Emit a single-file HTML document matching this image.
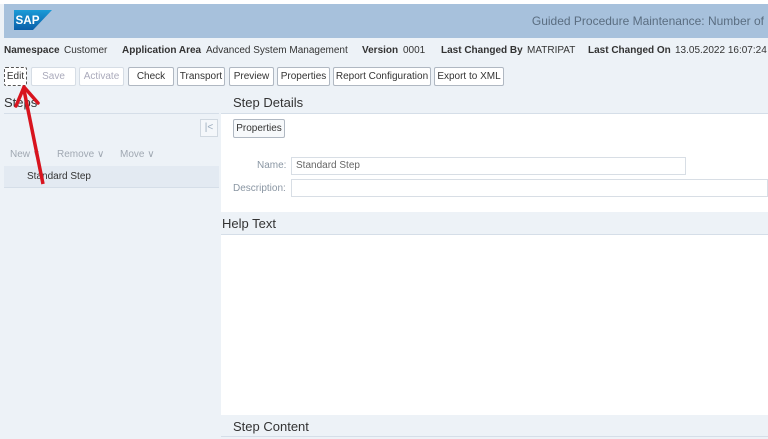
<!DOCTYPE html>
<html><head><style>
*{margin:0;padding:0;box-sizing:border-box}
body{width:768px;height:439px;overflow:hidden;background:#edf2f7;font-family:"Liberation Sans",Arial,sans-serif;position:relative;color:#333}
.a{position:absolute;white-space:nowrap}
.i{position:absolute;top:45px;font-size:10px;white-space:nowrap;color:#333}
.btn{position:absolute;top:67px;height:19px;border:1px solid #b0b8c2;background:#fff;font-size:10px;line-height:17px;text-align:center;color:#333;border-radius:2px;white-space:nowrap;overflow:hidden}
.dis{color:#aab;border-color:#d6dde5}
.hd{position:absolute;font-size:13px;color:#333;white-space:nowrap}
</style></head><body>
<div class="a" style="left:0;top:0;width:768px;height:4px;background:#fff"></div>
<div class="a" style="left:4px;top:4px;width:764px;height:34px;background:#a7c1dc"></div>
<svg class="a" style="left:14px;top:10px" width="38" height="20" viewBox="0 0 38 20"><defs><linearGradient id="g" x1="0" y1="0" x2="0" y2="1"><stop offset="0" stop-color="#1a9bd7"/><stop offset="1" stop-color="#0a5ea8"/></linearGradient></defs><path d="M0 0H38L19 20H0Z" fill="url(#g)"/><text x="1.5" y="14" font-family="Liberation Sans" font-weight="bold" font-size="11.5" fill="#fff" textLength="24" lengthAdjust="spacingAndGlyphs">SAP</text></svg>
<div class="a" style="right:4px;top:14px;font-size:12px;color:#5a6d80">Guided Procedure Maintenance: Number of</div>
<div class="i" style="left:4px"><b>Namespace</b></div><div class="i" style="left:64px">Customer</div>
<div class="i" style="left:122px"><b>Application Area</b></div><div class="i" style="left:206px">Advanced System Management</div>
<div class="i" style="left:362px"><b>Version</b></div><div class="i" style="left:403px">0001</div>
<div class="i" style="left:441px"><b>Last Changed By</b></div><div class="i" style="left:527px">MATRIPAT</div>
<div class="i" style="left:588px"><b>Last Changed On</b></div><div class="i" style="left:675px">13.05.2022 16:07:24</div>
<div class="btn" style="left:4px;width:23px;border:1px dashed #555">Edit</div>
<div class="btn dis" style="left:31px;width:45px">Save</div>
<div class="btn dis" style="left:79px;width:45px">Activate</div>
<div class="btn" style="left:128px;width:46px">Check</div>
<div class="btn" style="left:177px;width:48px">Transport</div>
<div class="btn" style="left:229px;width:45px">Preview</div>
<div class="btn" style="left:277px;width:53px">Properties</div>
<div class="btn" style="left:333px;width:98px">Report Configuration</div>
<div class="btn" style="left:434px;width:70px">Export to XML</div>
<div class="hd" style="left:4px;top:95px">Steps</div>
<div class="a" style="left:4px;top:113px;width:215px;height:1px;background:#d5dee8"></div>
<div class="a" style="left:200px;top:119px;width:18px;height:18px;border:1px solid #d0d8e0;background:#f4f7fa;font-size:10px;color:#9ab;text-align:center;line-height:16px">|&lt;</div>
<div class="a" style="left:10px;top:149px;font-size:10px;color:#a0a8b2">New ∨</div>
<div class="a" style="left:57px;top:149px;font-size:10px;color:#a0a8b2">Remove ∨</div>
<div class="a" style="left:120px;top:149px;font-size:10px;color:#a0a8b2">Move ∨</div>
<div class="a" style="left:4px;top:166px;width:215px;height:22px;background:#e3eaf2;border-bottom:1px solid #d5dee8"></div>
<div class="a" style="left:27px;top:171px;font-size:10px">Standard Step</div>
<div class="a" style="left:221px;top:113px;width:547px;height:99px;background:#fff"></div>
<div class="hd" style="left:233px;top:95px">Step Details</div>
<div class="a" style="left:221px;top:113px;width:547px;height:1px;background:#d5dee8"></div>
<div class="a" style="left:233px;top:119px;width:52px;height:19px;border:1px solid #b0b8c2;border-radius:2px;background:#f7f9fb;font-size:10px;line-height:17px;text-align:center">Properties</div>
<div class="a" style="left:257px;top:160px;font-size:10px;color:#8a96a3">Name:</div>
<div class="a" style="left:291px;top:157px;width:395px;height:18px;border:1px solid #d8dee5;font-size:10px;color:#666;padding-left:4px;line-height:16px">Standard Step</div>
<div class="a" style="left:233px;top:183px;font-size:10px;color:#8a96a3">Description:</div>
<div class="a" style="left:291px;top:179px;width:477px;height:18px;border:1px solid #d8dee5"></div>
<div class="hd" style="left:222px;top:216px">Help Text</div>
<div class="a" style="left:221px;top:234px;width:547px;height:181px;background:#fff;border-top:1px solid #d5dee8"></div>
<div class="hd" style="left:233px;top:419px">Step Content</div>
<div class="a" style="left:221px;top:436px;width:547px;height:1px;background:#d5dee8"></div>
<svg class="a" style="left:0;top:0" width="768" height="439"><path d="M43 184L24 90" stroke="#d8141e" stroke-width="3.5" fill="none"/><path d="M24 87L16 106M24 87L38 103" stroke="#d8141e" stroke-width="3.5" fill="none" stroke-linecap="round"/></svg>
</body></html>
